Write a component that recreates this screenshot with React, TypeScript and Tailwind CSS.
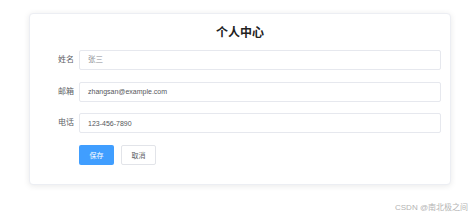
import React from "react";

const font = { fontFamily: '"Liberation Sans", "Noto Sans CJK SC", Arial, sans-serif' };

function Row({ label, value, muted }: { label: string; value: string; muted?: boolean }) {
  return (
    <div className="flex items-center h-[20px]">
      <div className="w-[40px] pr-[5px] text-right text-[8px] text-[#606266] leading-none">{label}</div>
      <div className="flex-1 h-[20px] border border-[#e6e8ee] rounded-[2px] bg-white flex items-center pl-[8px]">
        <span className={`leading-none ${muted ? "text-[7.5px] text-[#8a8d93]" : "text-[7px] text-[#55575b]"}`}>{value}</span>
      </div>
    </div>
  );
}

export default function App() {
  return (
    <div className="relative w-[474px] h-[217px] bg-white overflow-hidden" style={font}>
      <div className="pt-[13px] pl-[29px]">
        <div className="w-[422px] h-[172px] rounded-[4px] border border-[#eceef3] bg-white shadow-[0_1px_6px_rgba(0,0,0,0.09)] px-[9px] pt-[11px]">
          <div className="text-center text-[12px] font-bold text-[#222] leading-[16px]">个人中心</div>
          <div className="mt-[9px] flex flex-col gap-[11.5px]">
            <Row label="姓名" value="张三" muted />
            <Row label="邮箱" value="zhangsan@example.com" />
            <Row label="电话" value="123-456-7890" />
          </div>
          <div className="mt-[12px] pl-[40px] flex gap-[7px]">
            <button className="w-[35px] h-[20px] rounded-[2px] bg-[#409eff] text-white text-[7px] leading-none flex items-center justify-center">保存</button>
            <button className="w-[35px] h-[20px] rounded-[2px] bg-white border border-[#e2e4e9] text-[#606266] text-[7px] leading-none flex items-center justify-center">取消</button>
          </div>
        </div>
      </div>
      <div className="absolute right-[6px] top-[203px] text-[8px] leading-[10px] text-[#b3b3b3]">CSDN @南北极之间</div>
    </div>
  );
}
